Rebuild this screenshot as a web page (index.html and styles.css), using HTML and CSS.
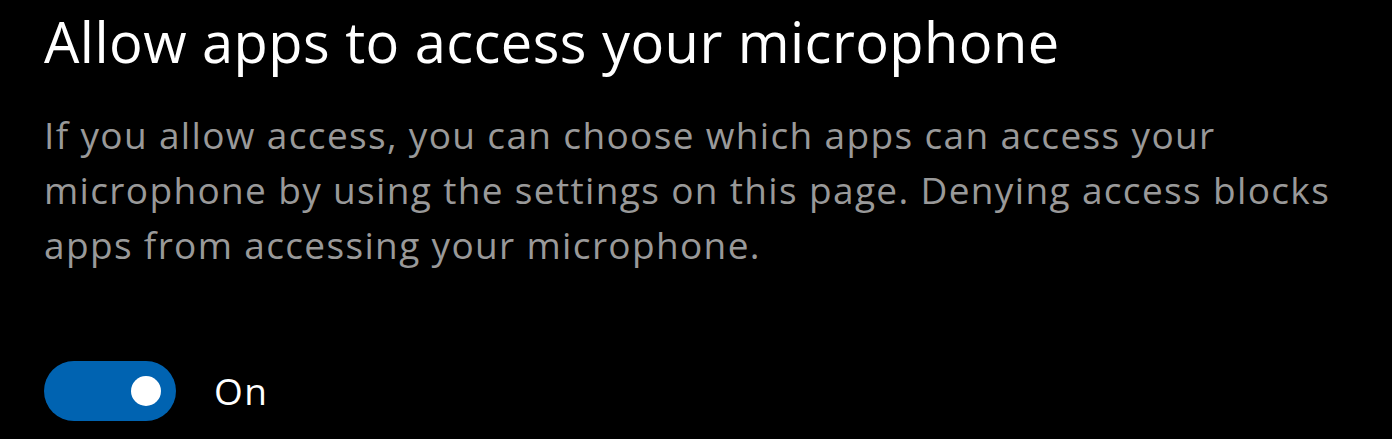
FILE: index.html
```html
<!DOCTYPE html>
<html lang="en">
<head>
    <meta charset="UTF-8">
    <title>Microphone</title>
    <link rel="stylesheet" href="styles.css">
</head>
<body>
    <div class="page">
        <h1 class="title">Allow apps to access your microphone</h1>
        <p class="desc">If you allow access, you can choose which apps can access your<br>microphone by using the settings on this page. Denying access blocks<br>apps from accessing your microphone.</p>
        <div class="toggle-row">
            <div class="toggle on"><span class="knob"></span></div>
            <span class="toggle-label">On</span>
        </div>
    </div>
</body>
</html>
```

FILE: styles.css
```css
body { margin: 0; background-color: #000; color: #fff; font-family: "Open Sans", sans-serif; }
.page { padding: 3px 0 0 44px; }
.title { margin: 0; font-size: 56px; font-weight: 400; line-height: 76px; letter-spacing: 0.45px; }
.desc { margin: 28px 0 0; font-size: 37px; line-height: 55px; letter-spacing: 1.35px; color: #999; }
.toggle-row { display: flex; align-items: center; gap: 38px; margin-top: 89px; }
.toggle { width: 132px; height: 60px; border-radius: 30px; background-color: #0063b1; display: flex; align-items: center; justify-content: flex-end; padding-right: 15px; box-sizing: border-box; }
.knob { width: 30px; height: 30px; border-radius: 50%; background-color: #fff; }
.toggle-label { font-size: 37px; line-height: 60px; letter-spacing: 1.35px; }
```
